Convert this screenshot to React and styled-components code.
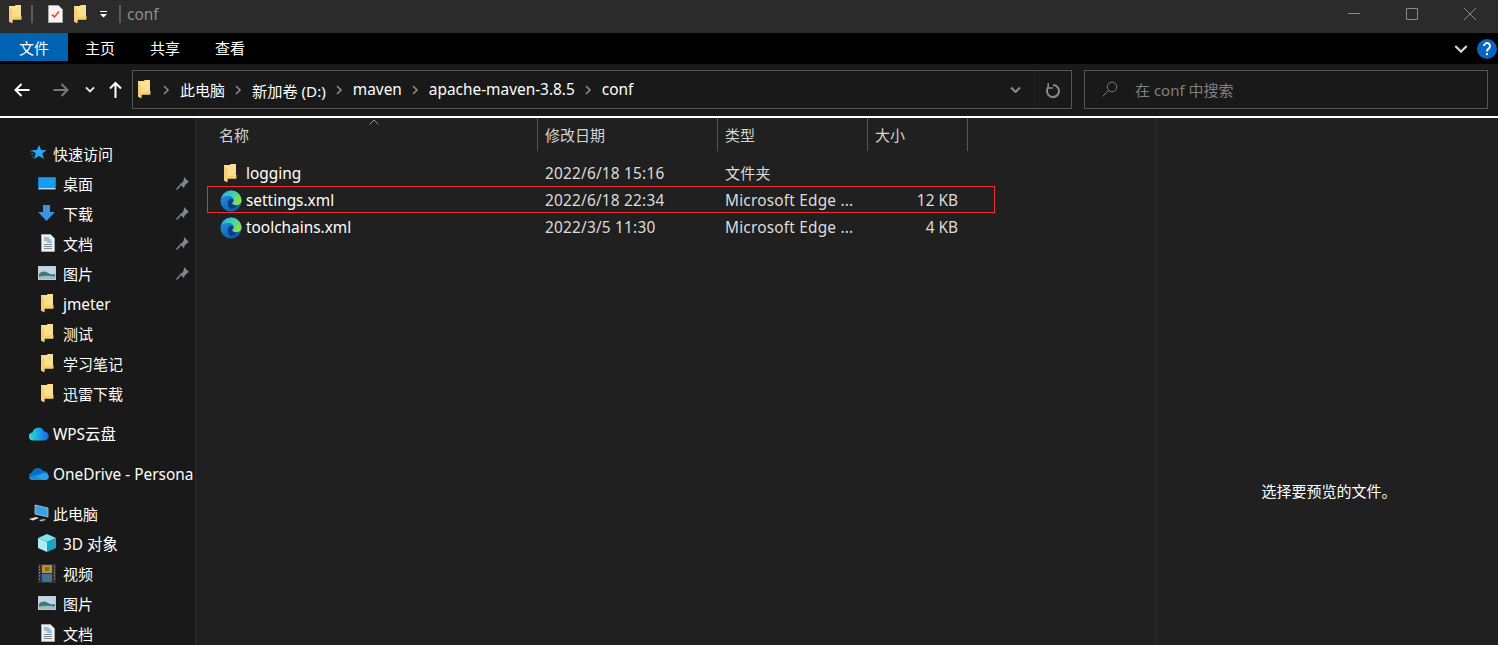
import React from "react";
import styled, { createGlobalStyle } from "styled-components";

const Global = createGlobalStyle`
  html, body { margin: 0; padding: 0; background: #202020; }
  * { box-sizing: border-box; }
`;

const Window = styled.div`
  width: 1498px;
  height: 645px;
  overflow: hidden;
  display: flex;
  flex-direction: column;
  color: #fff;
  font-family: "Noto Sans", "Noto Sans CJK SC", sans-serif;
  font-size: 15.4px;
`;
// Han text runs a touch smaller than the latin text next to it
const Label = styled.span`
  display: block;
  font-size: ${(p) => (p.$han ? "15px" : "inherit")};
  margin-top: ${(p) => (p.$han ? "-2px" : "0")};
  white-space: nowrap;
`;
const isHan = (s) => /^[\u4e00-\u9fff]+$/.test(s);
const isLatin = (s) => /^[\x00-\x7f]+$/.test(s);

/* title bar */
const TitleBar = styled.div`
  height: 33px;
  flex: none;
  background: #2b2b2b;
  display: flex;
  align-items: center;
  padding: 0 22px 5px 9px;
`;
const TitleSep = styled.div`
  width: 2px;
  height: 18px;
  border: 1px solid #5a5a5a;
  background: #444;
  margin: ${(p) => p.$margin};
`;
const TitleText = styled.span`
  color: #8f8f8f;
  margin-left: 6px;
`;
const TitleIcon = styled.div`
  display: flex;
  margin-left: ${(p) => p.$left}px;
`;
const Spacer = styled.div`
  flex: 1;
`;
const WinButtons = styled.div`
  display: flex;
  align-items: center;
  gap: 46px;
`;

/* ribbon */
const Ribbon = styled.div`
  height: 31px;
  flex: none;
  background: #000;
  display: flex;
  align-items: flex-start;
  padding-right: 1px;
`;
const Tab = styled.div`
  width: ${(p) => (p.$active ? "68px" : "65px")};
  height: 28px;
  padding-right: ${(p) => (p.$active ? "0" : "1px")};
  display: flex;
  align-items: center;
  justify-content: center;
  font-size: 15px;
  background: ${(p) => (p.$active ? "#0063b1" : "transparent")};
`;
const RibbonEnd = styled.div`
  display: flex;
  align-items: center;
  gap: 9px;
  height: 31px;
`;

/* navigation */
const Nav = styled.div`
  height: 52px;
  flex: none;
  background: #191919;
  display: flex;
  align-items: center;
  padding: 0 10px 1px 14px;
`;
const NavIcon = styled.div`
  display: flex;
  margin-right: ${(p) => p.$gap}px;
`;
const AddressBar = styled.div`
  width: 940px;
  height: 39px;
  border: 1px solid #555;
  display: flex;
  align-items: center;
  padding-left: 5px;
`;
const Crumb = styled.span`
  color: #fff;
  white-space: nowrap;
  font-size: ${(p) => p.$size || "inherit"};
`;
const CrumbArrow = styled.div`
  display: flex;
  margin: 0 10px 0 ${(p) => p.$left}px;
`;
const AddressEnd = styled.div`
  margin-left: auto;
  display: flex;
  align-items: center;
  height: 100%;
`;
const AddressBtn = styled.div`
  width: ${(p) => p.$w}px;
  height: 100%;
  display: flex;
  align-items: center;
  justify-content: center;
  border-left: ${(p) => (p.$line ? "1px solid #222" : "none")};
`;
const SearchBox = styled.div`
  width: 404px;
  height: 39px;
  margin-left: 12px;
  border: 1px solid #555;
  display: flex;
  align-items: center;
  gap: 17px;
  padding: 0 0 1px 17px;
  color: #808080;
  font-size: 15px;
`;
const WhiteLine = styled.div`
  height: 2px;
  flex: none;
  background: #fff;
`;

/* body */
const Body = styled.div`
  flex: 1;
  min-height: 0;
  display: flex;
`;
const Sidebar = styled.div`
  width: 196px;
  flex: none;
  background: #191919;
  border-right: 1px solid #2b2b2b;
  padding-top: 20px;
  overflow: hidden;
`;
const SideRow = styled.div`
  height: 30px;
  display: flex;
  align-items: center;
  white-space: nowrap;
  overflow: hidden;
  padding-left: ${(p) => (p.$child ? 38 : 29)}px;
  margin-top: ${(p) => (p.$group ? 10 : 0)}px;
`;
const SideIcon = styled.div`
  width: ${(p) => (p.$child ? 25 : 24)}px;
  flex: none;
  display: flex;
  padding-left: ${(p) => p.$inset || 0}px;
`;
const SideLabel = styled.span`
  flex: 1;
  font-size: ${(p) => (p.$han ? "15px" : "inherit")};
  padding-top: ${(p) => (p.$latin ? "2px" : "0")};
`;
const Pin = styled.div`
  display: flex;
  margin-right: 6px;
`;

const Main = styled.div`
  flex: 1;
  background: #202020;
  padding-left: 10px;
`;
const HeaderRow = styled.div`
  display: grid;
  grid-template-columns: 332px 180px 150px 100px;
  height: 33px;
  color: #d4d4d4;
  font-size: 15px;
  position: relative;
`;
const HeaderCell = styled.div`
  border-right: 1px solid #555;
  padding: 6px 0 0 ${(p) => p.$pad || 7}px;
`;
const SortMark = styled.div`
  position: absolute;
  left: 163px;
  top: 1px;
  display: flex;
`;
const List = styled.div`
  padding-top: 8px;
`;
const FileRow = styled.div`
  width: 788px;
  height: 27px;
  margin-left: 1px;
  padding-top: 2px;
  display: grid;
  grid-template-columns: 330px 180px 150px 90px;
  align-items: center;
  border: 1px solid ${(p) => (p.$marked ? "#f02c2c" : "transparent")};
`;
const NameCell = styled.div`
  display: flex;
  align-items: center;
  gap: ${(p) => p.$gap}px;
  padding-left: ${(p) => p.$pad}px;
`;
const DataCell = styled.div`
  color: #dcdcdc;
  padding-left: 7px;
  white-space: nowrap;
  letter-spacing: 0.2px;
`;
const SizeCell = styled.div`
  color: #dcdcdc;
  text-align: right;
`;

const Preview = styled.div`
  width: 343px;
  flex: none;
  background: #202020;
  border-left: 1px solid #2b2b2b;
  display: flex;
  justify-content: center;
  padding: 362px 0 0 4px;
  font-size: 15px;
`;

/* drawings */
const Chevron = ({ color = "#8a8a8a", size = 8 }) => (
  <svg width={size} height={size * 1.25} viewBox="0 0 8 10" fill="none">
    <path d="M2 1l4 4-4 4" stroke={color} strokeWidth="1.6" />
  </svg>
);
const ChevronDown = ({ color = "#ddd", w = 11, sw = 2 }) => (
  <svg width={w} height={w * 0.7} viewBox="0 0 11 7.7" fill="none">
    <path d="M1 1.5l4.5 4.5L10 1.5" stroke={color} strokeWidth={sw} />
  </svg>
);
const Arrow = ({ color, flip }) => (
  <svg width="16" height="14" viewBox="0 0 16 14" fill="none">
    <path d={flip ? "M.5 7h14M8.500 1l6 6-6 6" : "M15.500 7H1.500M7.500 1L1.500 7l6 6"} stroke={color} strokeWidth="2" />
  </svg>
);
const ArrowUp = () => (
  <svg width="13" height="17" viewBox="0 0 13 17" fill="none">
    <path d="M6.5 17V2M1 7.5l5.5-5.5L12 7.5" stroke="#fff" strokeWidth="2" />
  </svg>
);
const Folder = () => (
  <svg width="13" height="19" viewBox="0 0 13 19">
    <path d="M0 1h5.5L7 0h5v14.5H3.5V18L0 16.5z" fill="#fde08e" />
    <path d="M3.5 14.5V6L0 1v15.5L3 18.5z" fill="#f0cc72" opacity=".8" />
    <path d="M3.5 14.5h9V11l-9 1z" fill="#f8cf6c" />
  </svg>
);
const Doc = () => (
  <svg width="15" height="18" viewBox="0 0 15 18">
    <path d="M.5.5h10l4 4v13H.5z" fill="#f4f4f4" stroke="#aaa" />
    <path d="M4 9.5l2.5 2.5L11 6.5" fill="none" stroke="#e8562a" strokeWidth="1.8" />
  </svg>
);
const Caret = () => (
  <svg width="7" height="7" viewBox="0 0 7 7">
    <path d="M0 0h7v1H0zM0 3h7L3.5 6.500z" fill="#fff" />
  </svg>
);
const Star = () => (
  <svg width="18" height="16" viewBox="0 0 18 16">
    <path d="M10 0l2.2 5h5.3l-4.2 3.5 1.6 5.5-4.9-3-4.900 3 1.600-5.500L2.500 5h5.300z" fill="#2aa6f3" />
    <path d="M1 6h4M2 9h3M3 12h2" stroke="#1d7fc4" />
  </svg>
);
const Desktop = () => (
  <svg width="18" height="13" viewBox="0 0 18 13">
    <rect width="18" height="13" fill="#0f7fd6" />
    <path d="M1 1h16v10H1z" fill="#1a9bf0" />
    <path d="M1 11h16v1H1z" fill="#bfe3fa" />
  </svg>
);
const Download = () => (
  <svg width="17" height="16" viewBox="0 0 17 16">
    <path d="M5 0h7v7h5l-8.500 9L0 7h5z" fill="#3d93e0" />
  </svg>
);
const PageDoc = () => (
  <svg width="14" height="18" viewBox="0 0 14 18">
    <path d="M.5.5h9l4 4v13H.5z" fill="#efefef" stroke="#a8a8a8" />
    <path d="M3 4h5M3 6h7M6 8h5" stroke="#3a8fd8" />
    <path d="M3 10.500h8M3 12.500h8M3 14.500h8" stroke="#888" />
  </svg>
);
const Picture = () => (
  <svg width="18" height="14" viewBox="0 0 18 14">
    <rect x=".5" y=".5" width="17" height="13" fill="#bcd8ee" stroke="#c8c8c8" />
    <path d="M1 8c3-3 6-3 9-1s5 1 7 1v5H1z" fill="#3d7a78" />
    <path d="M1 10.500c5-1 11-1 16 0V13H1z" fill="#9fb9c0" />
  </svg>
);
const PinIcon = () => (
  <svg width="13" height="13" viewBox="0 0 13 13">
    <path d="M8 0l5 5-1.500.7-3 3-.5 2.500L3.500 6.700l2.300-.5 2-3z" fill="#7f868c" />
    <path d="M4.500 8L.5 12.500" stroke="#7f868c" strokeWidth="1.500" />
  </svg>
);
const WpsCloud = () => (
  <svg width="20" height="15" viewBox="0 0 20 15">
    <defs>
      <linearGradient id="wps" x1="0" y1="0" x2="1" y2="0">
        <stop offset="0" stopColor="#2fe0c0" />
        <stop offset=".5" stopColor="#1aa4ea" />
        <stop offset="1" stopColor="#1d5fe0" />
      </linearGradient>
    </defs>
    <path d="M4.500 14.500a4 4 0 0 1-1-8 6 6 0 0 1 11.500-1 4.500 4.500 0 0 1 .500 9z" fill="url(#wps)" />
  </svg>
);
const OneDrive = () => (
  <svg width="20" height="13" viewBox="0 0 20 13">
    <path d="M4 13a3.800 3.800 0 0 1-1-7.500A6 6 0 0 1 14 4a4.500 4.500 0 0 1 5 6z" fill="#0a6fc4" />
    <path d="M4 13h12.500a3.300 3.300 0 0 0 2.900-4.800A4.500 4.500 0 0 0 13 6.500L4 10z" fill="#2a9eea" />
    <path d="M0 10.500L6 8l7 5H3.500A3.500 3.500 0 0 1 0 10.500z" fill="#1c8ade" />
  </svg>
);
const Computer = () => (
  <svg width="20" height="18" viewBox="0 0 20 18">
    <path d="M6 1l13 3v9L6 10z" fill="#3aa0e8" stroke="#c8d4dc" strokeWidth=".7" />
    <path d="M0 15l7-2 3 1-6 2.500z" fill="#e4e4e4" />
    <path d="M10 16l5-1 2 1-5 1.500z" fill="#bbb" />
  </svg>
);
const Cube = () => (
  <svg width="18" height="18" viewBox="0 0 18 18">
    <path d="M9 0l9 4-9 4-9-4z" fill="#7fe3ee" />
    <path d="M0 4l9 4v10l-9-4z" fill="#a9eef2" />
    <path d="M18 4L9 8v10l9-4z" fill="#1aa5c0" />
  </svg>
);
const Film = () => (
  <svg width="18" height="19" viewBox="0 0 18 19">
    <rect width="18" height="19" fill="#333" />
    <path d="M4 1h10v8H4z" fill="#c9872f" />
    <path d="M4 10h10v8H4z" fill="#2f6fc0" />
    <path d="M7 3h4v4H7zM7 12h4v4H7z" fill="#5a7a3a" />
    <path d="M1.500 2v15M16.500 2v15" stroke="#888" strokeDasharray="1.500 1.500" />
  </svg>
);
const Edge = () => (
  <svg width="22" height="22" viewBox="0 0 24 24">
    <defs>
      <linearGradient id="edgeBase" x1="0" y1="0" x2=".6" y2="1">
        <stop offset="0" stopColor="#1f9fe6" />
        <stop offset="1" stopColor="#0c5bb0" />
      </linearGradient>
      <linearGradient id="edgeTop" x1="0" y1="0" x2="1" y2=".6">
        <stop offset="0" stopColor="#28a8e0" />
        <stop offset=".5" stopColor="#3fd0b0" />
        <stop offset="1" stopColor="#8ae04a" />
      </linearGradient>
    </defs>
    <circle cx="12" cy="12" r="11.500" fill="url(#edgeBase)" />
    <path d="M2 8C3.500 3.500 7.500.5 12 .5c6.500 0 11.500 5 11.500 11 0 3.500-2.500 5-5.500 5-2.500 0-4.500-1-4.500-2 0-.7 1.500-1.200 1.500-3C15 8.500 12.500 6.500 10 6.500 6.500 6.500 3.500 7 2 8z" fill="url(#edgeTop)" />
    <path d="M8.500 14c0-2.800 1.800-4.500 4-4.500 1.300 0 2 .8 2 1.800 0 1.300-1.500 1.800-1.500 3 0 2 3 3 5.500 2.300-1.500 2.500-4 4-6.500 3.800C9.500 20 8.500 17 8.500 14z" fill="#0a3c80" />
  </svg>
);
const Refresh = () => (
  <svg width="16" height="16" viewBox="0 0 16 16" fill="none">
    <path d="M3.500 5A6 6 0 1 0 8 3" stroke="#8a8a8a" strokeWidth="2" />
    <path d="M3.200 1v5h5" stroke="#8a8a8a" strokeWidth="1.500" />
  </svg>
);
const Magnifier = () => (
  <svg width="16" height="16" viewBox="0 0 16 16" fill="none">
    <circle cx="10" cy="6" r="4.800" stroke="#7a7a7a" />
    <path d="M6.500 9.500L.5 15.500" stroke="#7a7a7a" />
  </svg>
);
const Help = () => (
  <svg width="20" height="20" viewBox="0 0 20 20">
    <circle cx="10" cy="10" r="10" fill="#0a63c0" />
    <path d="M7 7a3 3 0 1 1 4.600 2.600c-1 .7-1.600 1.200-1.600 2.900" fill="none" stroke="#fff" strokeWidth="1.900" />
    <rect x="9" y="14" width="2" height="2.200" fill="#fff" />
  </svg>
);

const quick = [
  { label: "桌面", icon: <Desktop />, pin: true },
  { label: "下载", icon: <Download />, pin: true },
  { label: "文档", icon: <PageDoc />, pin: true, inset: 3 },
  { label: "图片", icon: <Picture />, pin: true },
  { label: "jmeter", icon: <Folder />, inset: 3 },
  { label: "测试", icon: <Folder />, inset: 3 },
  { label: "学习笔记", icon: <Folder />, inset: 3 },
  { label: "迅雷下载", icon: <Folder />, inset: 3 },
];
const thisPc = [
  { label: "3D 对象", icon: <Cube /> },
  { label: "视频", icon: <Film /> },
  { label: "图片", icon: <Picture /> },
  { label: "文档", icon: <PageDoc />, inset: 3 },
];
const files = [
  { name: "logging", icon: <Folder />, date: "2022/6/18 15:16", type: "文件夹", size: "", pad: 16, gap: 9 },
  { name: "settings.xml", icon: <Edge />, date: "2022/6/18 22:34", type: "Microsoft Edge ...", size: "12 KB", marked: true, pad: 12, gap: 4 },
  { name: "toolchains.xml", icon: <Edge />, date: "2022/3/5 11:30", type: "Microsoft Edge ...", size: "4 KB", pad: 12, gap: 4 },
];
const crumbs = [
  { text: "此电脑", size: "15px" },
  { text: "新加卷 (D:)", size: "15.2px" },
  { text: "maven" },
  { text: "apache-maven-3.8.5" },
  { text: "conf" },
];

const SideItem = ({ item }) => (
  <SideRow $child>
    <SideIcon $child $inset={item.inset}>
      {item.icon}
    </SideIcon>
    <SideLabel $han={isHan(item.label)} $latin={isLatin(item.label)}>
      {item.label}
    </SideLabel>
    {item.pin && (
      <Pin>
        <PinIcon />
      </Pin>
    )}
  </SideRow>
);

export default function App() {
  return (
    <Window>
      <Global />
      <TitleBar>
        <Folder />
        <TitleSep $margin="0 15px 0 9px" />
        <Doc />
        <TitleIcon $left={11}>
          <Folder />
        </TitleIcon>
        <TitleIcon $left={13}>
          <Caret />
        </TitleIcon>
        <TitleSep $margin="0 0 0 12px" />
        <TitleText>conf</TitleText>
        <Spacer />
        <WinButtons>
          <svg width="12" height="12" viewBox="0 0 12 12">
            <path d="M0 5.500h12" stroke="#8a8a8a" />
          </svg>
          <svg width="12" height="12" viewBox="0 0 12 12" fill="none">
            <path d="M.5.5h11v11H.5z" stroke="#8a8a8a" />
          </svg>
          <svg width="12" height="12" viewBox="0 0 12 12">
            <path d="M0 0l12 12M12 0L0 12" stroke="#8a8a8a" />
          </svg>
        </WinButtons>
      </TitleBar>

      <Ribbon>
        <Tab $active>文件</Tab>
        <Tab>主页</Tab>
        <Tab>共享</Tab>
        <Tab>查看</Tab>
        <Spacer />
        <RibbonEnd>
          <ChevronDown color="#d8d8d8" w={14} sw={1.700} />
          <Help />
        </RibbonEnd>
      </Ribbon>

      <Nav>
        <NavIcon $gap={23}>
          <Arrow color="#fff" />
        </NavIcon>
        <NavIcon $gap={16}>
          <Arrow color="#7a7a7a" flip />
        </NavIcon>
        <NavIcon $gap={14}>
          <ChevronDown color="#eee" w={10} />
        </NavIcon>
        <NavIcon $gap={10}>
          <ArrowUp />
        </NavIcon>
        <AddressBar>
          <Folder />
          {crumbs.map((c, i) => (
            <React.Fragment key={c.text}>
              <CrumbArrow $left={i === 0 ? 11 : 9}>
                <Chevron />
              </CrumbArrow>
              <Crumb $size={c.size}>{c.text}</Crumb>
            </React.Fragment>
          ))}
          <AddressEnd>
            <AddressBtn $w={38}>
              <ChevronDown color="#8a8a8a" w={11} />
            </AddressBtn>
            <AddressBtn $w={37} $line>
              <Refresh />
            </AddressBtn>
          </AddressEnd>
        </AddressBar>
        <SearchBox>
          <Magnifier />
          <span>在 conf 中搜索</span>
        </SearchBox>
      </Nav>
      <WhiteLine />

      <Body>
        <Sidebar>
          <SideRow>
            <SideIcon>
              <Star />
            </SideIcon>
            <SideLabel $han>快速访问</SideLabel>
          </SideRow>
          {quick.map((q) => (
            <SideItem key={q.label} item={q} />
          ))}
          <SideRow $group>
            <SideIcon>
              <WpsCloud />
            </SideIcon>
            <SideLabel>WPS云盘</SideLabel>
          </SideRow>
          <SideRow $group>
            <SideIcon>
              <OneDrive />
            </SideIcon>
            <SideLabel $latin>OneDrive - Persona</SideLabel>
          </SideRow>
          <SideRow $group>
            <SideIcon>
              <Computer />
            </SideIcon>
            <SideLabel $han>此电脑</SideLabel>
          </SideRow>
          {thisPc.map((q) => (
            <SideItem key={q.label} item={q} />
          ))}
        </Sidebar>

        <Main>
          <HeaderRow>
            <HeaderCell $pad={13}>名称</HeaderCell>
            <HeaderCell>修改日期</HeaderCell>
            <HeaderCell>类型</HeaderCell>
            <HeaderCell>大小</HeaderCell>
            <SortMark>
              <svg width="10" height="6" viewBox="0 0 10 6" fill="none">
                <path d="M.5 5.500L5 1l4.500 4.500" stroke="#999" />
              </svg>
            </SortMark>
          </HeaderRow>
          <List>
            {files.map((f) => (
              <FileRow key={f.name} $marked={f.marked}>
                <NameCell $pad={f.pad} $gap={f.gap}>
                  {f.icon}
                  <span>{f.name}</span>
                </NameCell>
                <DataCell>{f.date}</DataCell>
                <DataCell>
                  <Label $han={isHan(f.type)}>{f.type}</Label>
                </DataCell>
                <SizeCell>{f.size}</SizeCell>
              </FileRow>
            ))}
          </List>
        </Main>

        <Preview>选择要预览的文件。</Preview>
      </Body>
    </Window>
  );
}
